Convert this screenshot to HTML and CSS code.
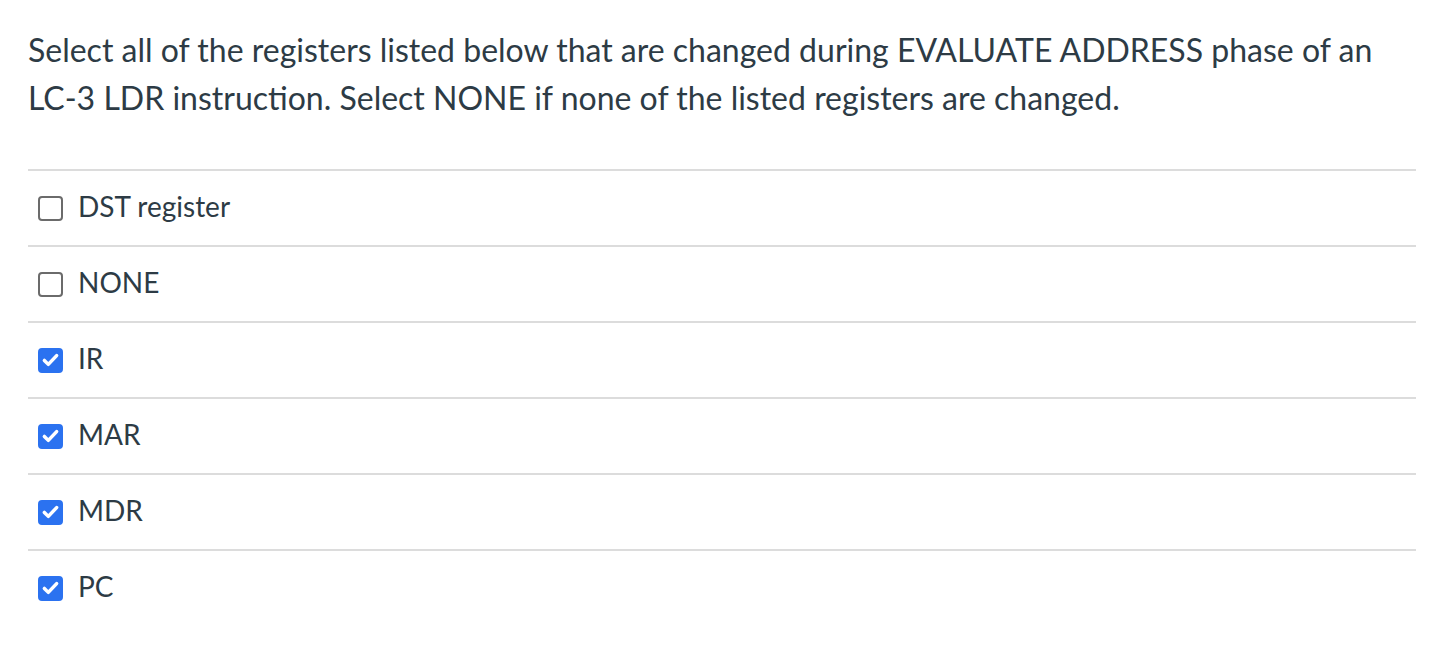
FILE: index.html
```html
<!DOCTYPE html>
<html>
<head>
<meta charset="utf-8">
<link rel="stylesheet" href="styles.css">
</head>
<body>
<div class="quiz">
  <p class="question">Select all of the registers listed below that are changed during EVALUATE ADDRESS phase of an LC-3 LDR instruction. Select NONE if none of the listed registers are changed.</p>
  <ul class="answers">
    <li class="answer"><span class="box"></span><span class="label">DST register</span></li>
    <li class="answer"><span class="box"></span><span class="label">NONE</span></li>
    <li class="answer"><span class="box checked"><svg viewBox="0 0 24 24" width="24" height="24"><path d="M5 12.5l4.5 4.5 9.5-10" fill="none" stroke="#fff" stroke-width="4" stroke-linecap="round" stroke-linejoin="round"/></svg></span><span class="label">IR</span></li>
    <li class="answer"><span class="box checked"><svg viewBox="0 0 24 24" width="24" height="24"><path d="M5 12.5l4.5 4.5 9.5-10" fill="none" stroke="#fff" stroke-width="4" stroke-linecap="round" stroke-linejoin="round"/></svg></span><span class="label">MAR</span></li>
    <li class="answer"><span class="box checked"><svg viewBox="0 0 24 24" width="24" height="24"><path d="M5 12.5l4.5 4.5 9.5-10" fill="none" stroke="#fff" stroke-width="4" stroke-linecap="round" stroke-linejoin="round"/></svg></span><span class="label">MDR</span></li>
    <li class="answer"><span class="box checked"><svg viewBox="0 0 24 24" width="24" height="24"><path d="M5 12.5l4.5 4.5 9.5-10" fill="none" stroke="#fff" stroke-width="4" stroke-linecap="round" stroke-linejoin="round"/></svg></span><span class="label">PC</span></li>
  </ul>
</div>
</body>
</html>
```
FILE: styles.css
```css
html, body {
  margin: 0;
  padding: 0;
  background: #fff;
}
body {
  font-family: Lato, "Open Sans", sans-serif;
  color: #2d3b45;
}
.quiz {
  width: 1388px;
  padding: 26px 0 0 28px;
}
.question {
  margin: 0 0 47px 0;
  font-size: 32px;
  line-height: 48px;
  padding-right: 20px;
}
.answers {
  list-style: none;
  margin: 0;
  padding: 0;
}
.answer {
  display: flex;
  align-items: center;
  height: 74px;
  border-top: 2px solid #dcdcdc;
}
.box {
  box-sizing: border-box;
  width: 25px;
  height: 25px;
  margin-left: 10px;
  margin-right: 15px;
  border: 2px solid #6b6b6b;
  border-radius: 4px;
  display: flex;
  align-items: center;
  justify-content: center;
  flex: none;
}
.box.checked {
  background: #2b72f0;
  border-color: #2b72f0;
}
.label {
  font-size: 28px;
  padding-bottom: 5px;
}
```
